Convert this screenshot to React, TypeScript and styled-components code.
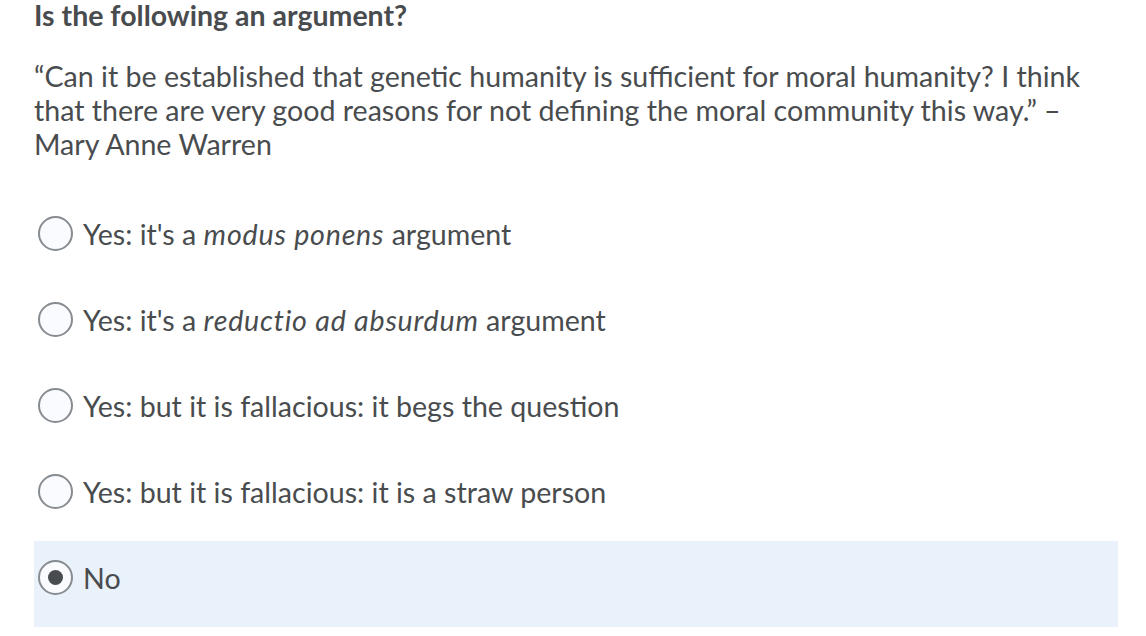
import React from 'react';
import styled, { createGlobalStyle } from 'styled-components';

const GlobalStyle = createGlobalStyle`
    body {
        margin: 0;
        background: #ffffff;
        font-family: Lato, "Open Sans", sans-serif;
        color: #494c4e;
    }
`
const Page = styled.div`
    padding: 0 20px 0 34px;
`
const Title = styled.h1`
    margin: 0;
    font-size: 28.5px;
    font-weight: 700;
    line-height: 30px;
`
const Quote = styled.p`
    margin: 29px 0 0;
    font-size: 28.6px;
    line-height: 34px;
`
const Options = styled.div`
    margin-top: 36px;
    margin-right: 8px;
    display: flex;
    flex-direction: column;
`
const Row = styled.label<{ $selected?: boolean }>`
    height: 86px;
    box-sizing: border-box;
    display: flex;
    align-items: center;
    padding: 0 0 0 4px;
    background: ${p => (p.$selected ? '#e9f1fb' : 'transparent')};
    font-size: 28.6px;
    line-height: 34px;
`
const Line = styled.div`
    display: flex;
    align-items: center;
    margin-top: -13px;
`
const Radio = styled.span<{ $checked?: boolean }>`
    flex: none;
    width: 35px;
    height: 35px;
    box-sizing: border-box;
    border-radius: 50%;
    border: 2px solid #878c90;
    background: #f9fbff;
    margin-right: 10px;
    display: flex;
    align-items: center;
    justify-content: center;
    &::after {
        content: '';
        display: ${p => (p.$checked ? 'block' : 'none')};
        width: 15px;
        height: 15px;
        border-radius: 50%;
        background: #494c4e;
    }
`
const Em = styled.em`
    font-style: italic;
    letter-spacing: 0.8px;
`

const choices: { id: string; label: React.ReactNode }[] = [
    { id: 'a', label: <>Yes: it's a <Em>modus ponens</Em> argument</> },
    { id: 'b', label: <>Yes: it's a <Em>reductio ad absurdum</Em> argument</> },
    { id: 'c', label: <>Yes: but it is fallacious: it begs the question</> },
    { id: 'd', label: <>Yes: but it is fallacious: it is a straw person</> },
    { id: 'e', label: <>No</> },
]

export default function App() {
    const selected = 'e'
    return (
        <>
            <GlobalStyle />
            <Page>
                <Title>Is the following an argument?</Title>
                <Quote>
                    “Can it be established that genetic humanity is sufficient for moral humanity? I think<br />
                    that there are very good reasons for not defining the moral community this way.” –<br />
                    Mary Anne Warren
                </Quote>
                <Options>
                    {choices.map(c => (
                        <Row key={c.id} $selected={c.id === selected}>
                            <Line>
                                <Radio $checked={c.id === selected} />
                                <span>{c.label}</span>
                            </Line>
                        </Row>
                    ))}
                </Options>
            </Page>
        </>
    )
}
